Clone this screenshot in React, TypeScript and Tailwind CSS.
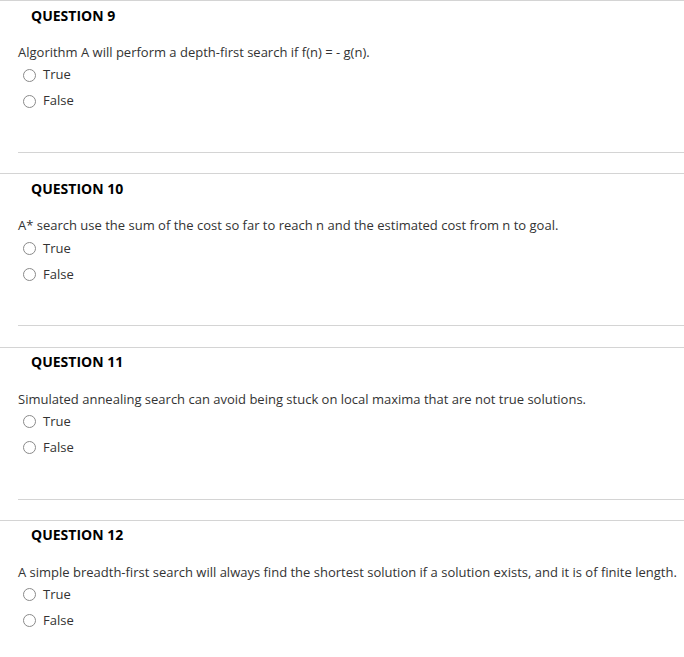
const QUESTIONS = [
  { n: 9, text: 'Algorithm A will perform a depth-first search if f(n) = - g(n).' },
  { n: 10, text: 'A* search use the sum of the cost so far to reach n and the estimated cost from n to goal.' },
  { n: 11, text: 'Simulated annealing search can avoid being stuck on local maxima that are not true solutions.' },
  { n: 12, text: 'A simple breadth-first search will always find the shortest solution if a solution exists, and it is of finite length.' },
]

function Radio({ label }: { label: string }) {
  return (
    <label className="flex items-center h-[24px] pl-[23px]">
      <span className="w-[13px] h-[13px] rounded-full border border-[#8a8a8a] bg-white" />
      <span className="ml-[7px] text-[13px] text-[#333]">{label}</span>
    </label>
  )
}

export default function App() {
  return (
    <div className="w-[684px] bg-white font-['Open_Sans',sans-serif] overflow-hidden">
      {QUESTIONS.map(q => (
        <div key={q.n} className="border-t border-[#d4d4d4] pb-[20.33px]">
          {/* Header */}
          <h3 className="h-[28px] flex items-center pl-[31px] text-[14px] font-bold text-black">
            QUESTION {q.n}
          </h3>

          <p className="mt-[13px] h-[20px] leading-[20px] pl-[18px] text-[13px] text-[#333] whitespace-nowrap">
            {q.text}
          </p>

          <div className="mt-[1px] flex flex-col gap-[2px]">
            <Radio label="True" />
            <Radio label="False" />
          </div>

          <div className="mt-[39px] ml-[18px] border-t border-[#d4d4d4]" />
        </div>
      ))}
    </div>
  )
}
